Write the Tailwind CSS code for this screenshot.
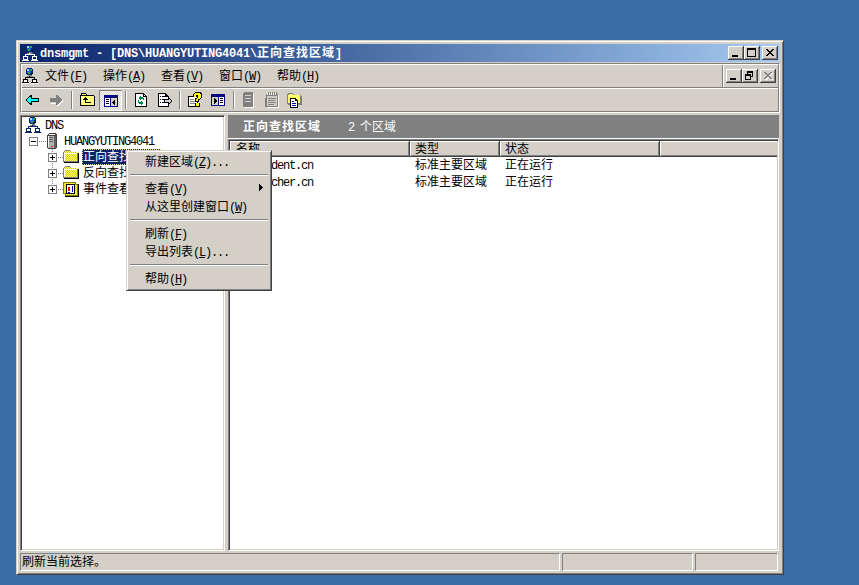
<!DOCTYPE html>
<html lang="zh-CN">
  <head>
    <meta charset="UTF-8" />
    <meta name="viewport" content="width=device-width, initial-scale=1.0" />
    <title>dnsmgmt</title>
    <script src="https://cdn.jsdelivr.net/npm/@tailwindcss/browser@4"></script>
  </head>
  <body class="bg-[#3a6ea5] h-screen overflow-hidden pl-4 pt-10 text-[12px] text-black whitespace-nowrap cursor-default font-['Liberation_Mono','Noto_Sans_CJK_SC',monospace]">

    <!-- Shared icons -->
    <svg width="0" height="0" class="absolute">
      <defs>
        <pattern id="dither" width="2" height="2" patternUnits="userSpaceOnUse">
          <path fill="#ffff66" d="M0 0h2v2H0z" /><path fill="#e0d010" d="M0 0h1v1H0zM1 1h1v1H1z" />
        </pattern>
        <pattern id="pressed" width="2" height="2" patternUnits="userSpaceOnUse">
          <path fill="#fff" d="M0 0h2v2H0z" /><path fill="#d4d0c8" d="M0 0h1v1H0zM1 1h1v1H1z" />
        </pattern>
        <symbol id="net" viewBox="0 0 16 16">
          <path fill="#808080" d="M7 7h3v1H7zM5 8h6v1H5z" />
          <path fill="#0a246a" d="M5 0h5v1h1v5h-1v1H5V6H4V1h1z" />
          <path fill="#2060e0" d="M5 1h4v4H5z" />
          <path fill="#20b040" d="M8 1h2v2H8zM6 4h2v2H6z" />
          <path fill="#a0d8ff" d="M5 1h2v2H5z" />
          <path fill="#000" d="M9 5h2v1H9z" />
        </symbol>
        <symbol id="folder" viewBox="0 0 16 16">
          <path fill="#808080" d="M1 3h1V2h5v1h1v1h6v1h1v9H0V4h1z" />
          <path fill="url(#dither)" d="M1 4h13v9H1zM2 3h5v1H2z" />
          <path fill="#fff" d="M1 5h13v1H1zM1 5h1v8H1z" />
          <path fill="#000" d="M15 5h1v10H1v-1h14z" />
        </symbol>
      </defs>
    </svg>

    <!-- Console window -->
    <div class="w-[768px] h-[535px] bg-[#d4d0c8] border border-l-[#d4d0c8] border-t-[#d4d0c8] border-r-[#404040] border-b-[#404040] shadow-[inset_1px_1px_#fff,inset_-1px_-1px_#808080] p-[3px] flex flex-col">

      <!-- Title bar -->
      <div class="h-[18px] shrink-0 flex items-center bg-linear-to-r from-[#0a246a] to-[#a6caf0] pl-0.5 pr-0.5 text-white font-bold">
        <svg class="w-4 h-4 mr-0.5" shape-rendering="crispEdges" viewBox="0 0 16 16">
          <use href="#net" width="16" height="16" />
          <path fill="#fff" d="M7 8h1v2H7zM3 9h10v1H3zM3 9h1v2H3zM12 9h1v2h-1zM1 11h5v4H1zM10 11h5v4h-5zM0 15h7v1H0zM9 15h7v1H9z" />
          <path fill="#0a246a" d="M2 12h3v2H2zM11 12h3v2h-3z" />
        </svg>
        <span class="leading-[18px] pt-px tracking-[-0.2px]">dnsmgmt - [DNS\HUANGYUTING4041\<span class="tracking-[1px]">正向查找区域</span>]</span>
        <div class="ml-auto flex">
          <svg class="w-4 h-3.5 bg-[#d4d0c8] shadow-[inset_-1px_-1px_#404040,inset_1px_1px_#fff,inset_-2px_-2px_#808080]" shape-rendering="crispEdges"><path d="M4 9h6v2H4z" /></svg>
          <svg class="w-4 h-3.5 bg-[#d4d0c8] shadow-[inset_-1px_-1px_#404040,inset_1px_1px_#fff,inset_-2px_-2px_#808080]" shape-rendering="crispEdges"><path fill-rule="evenodd" d="M3 2h9v9H3zM4 4v6h7V4z" /></svg>
          <svg class="w-4 h-3.5 ml-0.5 bg-[#d4d0c8] shadow-[inset_-1px_-1px_#404040,inset_1px_1px_#fff,inset_-2px_-2px_#808080]" shape-rendering="crispEdges"><path d="M4 3h2v1h1v1h2V4h1V3h2v1h-1v1h-1v1H9v1h1v1h1v1h1v1h-2V9H9V8H7v1H6v1H4V9h1V8h1V7h1V6H6V5H5V4H4z" /></svg>
        </div>
      </div>

      <!-- Menu bar and toolbar -->
      <div class="mt-px h-[50px] shrink-0 border border-l-[#808080] border-t-[#808080] border-r-white border-b-white">
        <div class="h-full border border-l-white border-t-white border-r-[#808080] border-b-[#808080]">
          <div class="h-[23px] flex border-b border-[#808080]">
            <svg class="w-4 h-4 mt-[3px] mr-[7px]" shape-rendering="crispEdges" viewBox="0 0 16 16">
              <use href="#net" width="16" height="16" />
              <path fill="#000" d="M7 8h1v2H7zM3 9h10v1H3zM3 9h1v2H3zM12 9h1v2h-1zM1 11h5v4H1zM10 11h5v4h-5zM0 14h7v1H0zM9 14h7v1H9z" />
              <path fill="#fff" d="M2 12h3v2H2zM11 12h3v2h-3zM0 15h7v1H0zM9 15h7v1H9z" />
            </svg>
            <div class="flex gap-4 leading-6">
              <span class="w-[42px]">文件<span class="tracking-[-1.2px]">(<u>F</u>)</span></span>
              <span class="w-[42px]">操作<span class="tracking-[-1.2px]">(<u>A</u>)</span></span>
              <span class="w-[42px]">查看<span class="tracking-[-1.2px]">(<u>V</u>)</span></span>
              <span class="w-[42px]">窗口<span class="tracking-[-1.2px]">(<u>W</u>)</span></span>
              <span class="w-[42px]">帮助<span class="tracking-[-1.2px]">(<u>H</u>)</span></span>
            </div>
            <div class="ml-auto w-14 h-[22px] flex items-center border-l border-[#808080] shadow-[inset_1px_0_#fff] pl-[3px]">
              <svg class="w-4 h-3.5 bg-[#d4d0c8] shadow-[inset_-1px_-1px_#404040,inset_1px_1px_#fff,inset_-2px_-2px_#808080]" shape-rendering="crispEdges"><path d="M4 9h6v2H4z" /></svg>
              <svg class="w-4 h-3.5 bg-[#d4d0c8] shadow-[inset_-1px_-1px_#404040,inset_1px_1px_#fff,inset_-2px_-2px_#808080]" shape-rendering="crispEdges"><path fill-rule="evenodd" d="M5 2h6v6H9v3H3V5h2zM6 4v1h3v2h1V4zM4 7v3h4V7z" /></svg>
              <svg class="w-4 h-3.5 ml-0.5 bg-[#d4d0c8] shadow-[inset_-1px_-1px_#404040,inset_1px_1px_#fff,inset_-2px_-2px_#808080]" shape-rendering="crispEdges">
                <path fill="#fff" transform="translate(1 1)" d="M4 3h2v1h1v1h2V4h1V3h2v1h-1v1h-1v1H9v1h1v1h1v1h1v1h-2V9H9V8H7v1H6v1H4V9h1V8h1V7h1V6H6V5H5V4H4z" />
                <path fill="#808080" d="M4 3h2v1h1v1h2V4h1V3h2v1h-1v1h-1v1H9v1h1v1h1v1h1v1h-2V9H9V8H7v1H6v1H4V9h1V8h1V7h1V6H6V5H5V4H4z" />
              </svg>
            </div>
          </div>

          <div class="h-[23px] border-t border-white flex items-center">
            <!-- back / forward -->
            <svg class="w-[23px] h-4" shape-rendering="crispEdges" viewBox="-3 0 23 16">
              <path fill="#000" d="M1 7h1V6h1V5h1V4h1V3h2v3h7v4H7v3H5v-1H4v-1H3v-1H2V9H1z" />
              <path fill="#0ff" d="M2 8V7h1V6h1V5h2v2h7v2H6v2H4v-1H3V9H2z" />
            </svg>
            <svg class="w-[23px] h-4" shape-rendering="crispEdges" viewBox="-3 0 23 16">
              <path fill="#fff" d="M3 11h6v2h1v-1h1v-1h1v-1h1V9h1V8h1v2h-1v1h-1v1h-1v1h-1v1H9v-2H3z" />
              <path fill="#808080" d="M2 6h6V3h2v1h1v1h1v1h1v1h1v2h-1v1h-1v1h-1v1h-1v1H8v-3H2z" />
            </svg>
            <div class="w-0.5 h-[18px] mx-[3px] bg-[#808080] border-r border-white"></div>
            <!-- up one level -->
            <svg class="w-[23px] h-4" shape-rendering="crispEdges" viewBox="-3 0 23 16">
              <path fill="#000" d="M2 2V1h5v1h1v1h7v1h1v10H1V3h1z" />
              <path fill="#ffff70" d="M2 4h13v9H2zM3 2h4v1H3z" />
              <path fill="#000" d="M6 5h1v1h1v1h1v1H7v2h5v1H6V8H4V7h1V6h1z" />
            </svg>
            <!-- show or hide tree -->
            <svg class="w-[23px] h-[21px] border border-t-[#808080] border-l-[#808080] border-b-white border-r-white" shape-rendering="crispEdges" viewBox="0 0 21 19">
              <path fill="url(#pressed)" d="M0 0h21v19H0z" />
              <path fill="#0a0a80" d="M4 4h14v12H4z" />
              <path fill="#fff" d="M5 7h5v8H5z" /><path fill="#d4d0c8" d="M11 7h6v8h-6z" />
              <path fill="#000" d="M6 8h3v1H6zM6 10h3v1H6zM6 12h3v1H6zM12 11h1v-1h1V9h1v5h-1v-1h-1v-1h-1z" />
            </svg>
            <div class="w-0.5 h-[18px] mx-[3px] bg-[#808080] border-r border-white"></div>
            <!-- refresh -->
            <svg class="w-[23px] h-4" shape-rendering="crispEdges" viewBox="-3 0 23 16">
              <path fill="#000" d="M2 1h9v1h1v1h1v1h1v11H2z" />
              <path fill="#fff" d="M3 2h7v3h3v9H3z" /><path fill="#d4d0c8" d="M11 3h1v1h-1z" />
              <path fill="#008040" d="M7 4h1v1h2v1h1v2h-1V7H8v1H7V7H6V5h1zM5 8h1v2h2V9h1v1h1v2H9v1H8v-1H6v-1H5z" />
            </svg>
            <!-- export -->
            <svg class="w-[23px] h-4" shape-rendering="crispEdges" viewBox="-3 0 23 16">
              <path fill="#000" d="M2 1h8v1h1v1h1v1h1v11H2z" />
              <path fill="#fff" d="M3 2h6v3h3v9H3z" />
              <path fill="#000" d="M4 4h1v1H4zM6 4h3v1H6zM4 7h1v1H4zM6 7h4v1H6zM4 10h1v1H4zM6 10h3v1H6z" />
              <path fill="#000" d="M8 7h4V5h1v1h1v1h1v1h1v2h-1v1h-1v1h-1v1h-1v-2H8z" /><path fill="#d4d0c8" d="M9 8h4V7h1v1h1v2h-1v1h-1v-1H9z" />
            </svg>
            <div class="w-0.5 h-[18px] mx-[3px] bg-[#808080] border-r border-white"></div>
            <!-- help -->
            <svg class="w-[23px] h-4" shape-rendering="crispEdges" viewBox="-3 0 23 16">
              <path fill="#000" d="M1 4h10v11H1z" /><path fill="#fff" d="M2 5h8v9H2z" />
              <path fill="#808080" d="M3 7h4v1H3zM3 9h5v1H3zM3 11h5v1H3z" />
              <path fill="#000" d="M7 1h1V0h6v1h1v5h-1v1h-1v1h-1v2H8V6h2V5H6V2h1z" />
              <path fill="#ff0" d="M8 1h5v1h1v4h-1v1h-2v2H9V7h1V6h1V3H9v2H7V2h1z" />
              <path fill="#000" d="M8 11h5v4H8z" /><path fill="#ff0" d="M9 11h3v3H9z" />
            </svg>
            <!-- action pane -->
            <svg class="w-[23px] h-4" shape-rendering="crispEdges" viewBox="-3 0 23 16">
              <path fill="#0a0a80" d="M1 2h14v12H1z" />
              <path fill="#d4d0c8" d="M2 5h6v8H2z" /><path fill="#fff" d="M9 5h5v8H9z" />
              <path fill="#000" d="M10 6h3v1h-3zM10 8h3v1h-3zM10 10h3v1h-3zM4 6h1v1h1v1h1v2H6v1H5v1H4z" />
            </svg>
            <div class="w-0.5 h-[18px] mx-[3px] bg-[#808080] border-r border-white"></div>
            <!-- server, properties, copy folder -->
            <svg class="w-[23px] h-4" shape-rendering="crispEdges" viewBox="-3 0 23 16">
              <path fill="#fff" d="M3 2h10v14H3z" /><path fill="#808080" d="M3 0h9v15H2V1h1z" />
              <path fill="#d4d0c8" d="M4 3h6v1H4zM4 6h6v1H4zM4 9h6v1H4z" />
            </svg>
            <svg class="w-[23px] h-4" shape-rendering="crispEdges" viewBox="-3 0 23 16">
              <path fill="#fff" d="M2 3h13v13H3z" /><path fill="#808080" d="M2 2h12v13H1V6h1z" />
              <path fill="#d4d0c8" d="M3 4h10v10H3z" />
              <path fill="#fff" d="M3 1h1v2H3zM5 1h1v2H5zM7 1h1v2H7zM9 1h1v2H9zM11 1h1v2h-1z" />
              <path fill="#808080" d="M4 0h1v2H4zM6 0h1v2H6zM8 0h1v2H8zM10 0h1v2h-1zM12 0h1v2h-1zM4 6h8v1H4zM4 8h7v1H4zM4 10h8v1H4zM4 12h6v1H4z" />
            </svg>
            <svg class="w-[23px] h-4" shape-rendering="crispEdges" viewBox="-3 0 23 16">
              <path fill="#808080" d="M1 1h5v1h1v1h7v1h1v9H1v-1H0V2h1z" /><path fill="#ffff70" d="M1 3h12v8H1zM2 2h4v1H2z" />
              <path fill="#000" d="M3 6h6v1h1v1h1v8H3z" /><path fill="#fff" d="M4 7h4v2h2v6H4z" />
              <path fill="#0000c0" d="M5 9h2v1H5zM5 11h4v1H5zM5 13h4v1H5z" />
            </svg>
          </div>
        </div>
      </div>

      <!-- Panes -->
      <div class="flex mt-0.5 h-[436px] shrink-0 gap-[3px]">
        <!-- Console tree -->
        <div class="w-[205px] bg-white border border-l-[#808080] border-t-[#808080] border-r-white border-b-white shadow-[inset_1px_1px_#404040,inset_-1px_-1px_#d4d0c8] pl-px pt-px leading-[18px]">
          <div class="h-4 flex pl-[3px]">
            <svg class="w-4 h-4 mr-1" shape-rendering="crispEdges" viewBox="0 0 16 16">
              <use href="#net" width="16" height="16" />
              <path fill="#0a246a" d="M7 8h1v2H7zM3 9h10v1H3zM3 9h1v2H3zM12 9h1v2h-1zM1 11h5v4H1zM10 11h5v4h-5zM0 15h7v1H0zM9 15h7v1H9z" />
              <path fill="#fff" d="M2 12h3v2H2zM11 12h3v2h-3z" />
            </svg>
            <span class="tracking-[-1.2px]">DNS</span>
          </div>
          <div class="h-4 flex pl-[7px]">
            <svg class="w-[32px] h-4 mr-[3px]" shape-rendering="crispEdges">
              <path fill="#808080" fill-rule="evenodd" d="M0 4h9v9H0zM1 5v7h7V5z" /><path d="M2 8h5v1H2z" />
              <path fill="#808080" d="M10 8h1v1h-1zM12 8h1v1h-1zM14 8h1v1h-1zM16 8h1v1h-1z" />
              <path fill="#404040" d="M20 0h7v1h1v14h-1v1h-8v-1h-1V2h1V1h1z" />
              <path fill="#b0b0b0" d="M19 3h6v12h-6z" /><path fill="#fff" d="M20 1h6v1h-6zM19 3h1v11h-1z" />
              <path fill="#606060" d="M20 4h4v1h-4zM20 6h4v1h-4zM20 8h4v1h-4zM25 3h2v12h-2z" />
              <path fill="#f00" d="M22 13h2v1h-2z" />
            </svg>
            <span class="tracking-[-1.2px]">HUANGYUTING4041</span>
          </div>
          <div class="h-4 flex pl-[26px]">
            <svg class="w-[31px] h-4 mr-[3px]" shape-rendering="crispEdges">
              <path fill="#808080" fill-rule="evenodd" d="M0 4h9v9H0zM1 5v7h7V5z" /><path d="M2 8h5v1H2zM4 6h1v5H4z" />
              <path fill="#808080" d="M10 8h1v1h-1zM12 8h1v1h-1zM14 8h1v1h-1zM4 0h1v1H4zM4 2h1v1H4zM4 14h1v1H4z" />
              <use href="#folder" x="15" y="-1" width="16" height="16" />
            </svg>
            <span class="w-[79px] h-4 bg-[#0a246a] text-white outline-1 -outline-offset-1 outline-dotted outline-[#f5db95] pl-px">正向查找区域</span>
          </div>
          <div class="h-4 flex pl-[26px]">
            <svg class="w-[31px] h-4 mr-1" shape-rendering="crispEdges">
              <path fill="#808080" fill-rule="evenodd" d="M0 4h9v9H0zM1 5v7h7V5z" /><path d="M2 8h5v1H2zM4 6h1v5H4z" />
              <path fill="#808080" d="M10 8h1v1h-1zM12 8h1v1h-1zM14 8h1v1h-1zM4 0h1v1H4zM4 2h1v1H4zM4 14h1v1H4z" />
              <use href="#folder" x="15" y="-1" width="16" height="16" />
            </svg>
            <span>反向查找区域</span>
          </div>
          <div class="h-4 flex pl-[26px]">
            <svg class="w-[31px] h-4 mr-1" shape-rendering="crispEdges">
              <path fill="#808080" fill-rule="evenodd" d="M0 4h9v9H0zM1 5v7h7V5z" /><path d="M2 8h5v1H2zM4 6h1v5H4z" />
              <path fill="#808080" d="M10 8h1v1h-1zM12 8h1v1h-1zM14 8h1v1h-1zM4 0h1v1H4zM4 2h1v1H4z" />
              <path fill="#808000" d="M15 1h13v2h2v12H17v-2h-2z" /><path fill="#000" d="M30 3h1v13H17v-1h13z" />
              <path fill="url(#dither)" d="M16 2h11v2h2v10H18v-2h-2z" />
              <path fill="#000" d="M18 3h9v10h-9z" /><path fill="#fff" d="M19 4h7v8h-7z" />
              <path fill="#f00" d="M20 6h2v4h-2z" /><path fill="#00c" d="M24 5h1v6h-1zM20 11h2v1h-2z" />
            </svg>
            <span>事件查看器</span>
          </div>
        </div>

        <!-- Zone list -->
        <div class="w-[551px] flex flex-col">
          <div class="h-[23px] shrink-0 bg-[#808080] text-white leading-[26px] pl-[15px] flex">
            <span class="w-[105px] font-bold tracking-[1px]">正向查找区域</span>
            <span><span class="tracking-[-1.2px]">2 </span>个区域</span>
          </div>
          <div class="h-px shrink-0 bg-white"></div>
          <div class="grow bg-white border border-l-[#808080] border-t-[#808080] border-r-white border-b-white shadow-[inset_1px_1px_#404040,inset_-1px_-1px_#d4d0c8] pl-px pt-px pr-px">
            <div class="h-4 flex leading-[18px]">
              <div class="w-[180px] h-4 overflow-hidden pl-1.5 bg-[#d4d0c8] shadow-[inset_-1px_-1px_#404040,inset_1px_1px_#fff,inset_-2px_-2px_#808080]">名称</div>
              <div class="w-[90px] h-4 overflow-hidden pl-[5px] bg-[#d4d0c8] shadow-[inset_-1px_-1px_#404040,inset_1px_1px_#fff,inset_-2px_-2px_#808080]">类型</div>
              <div class="w-40 h-4 overflow-hidden pl-[5px] bg-[#d4d0c8] shadow-[inset_-1px_-1px_#404040,inset_1px_1px_#fff,inset_-2px_-2px_#808080]">状态</div>
              <div class="grow h-4 bg-[#d4d0c8] shadow-[inset_0_-1px_#404040,inset_1px_1px_#fff,inset_0_-2px_#808080]"></div>
            </div>
            <div class="grid grid-cols-[162px_90px_160px] pl-[23px] pt-px leading-[17px]">
              <span class="tracking-[-1.2px]">student.cn</span><span>标准主要区域</span><span>正在运行</span>
              <span class="tracking-[-1.2px]">teacher.cn</span><span>标准主要区域</span><span>正在运行</span>
            </div>
          </div>
        </div>
      </div>

      <!-- Status bar -->
      <div class="mt-0.5 h-[18px] shrink-0 flex gap-0.5 leading-[18px]">
        <div class="w-[540px] pl-px border border-l-[#808080] border-t-[#808080] border-r-white border-b-white">刷新当前选择。</div>
        <div class="w-[131px] border border-l-[#808080] border-t-[#808080] border-r-white border-b-white"></div>
        <div class="w-[83px] border border-l-[#808080] border-t-[#808080] border-r-white border-b-white"></div>
      </div>
    </div>

    <!-- Context menu -->
    <div class="absolute left-[126px] top-[150px] w-[146px] h-[141px] bg-[#d4d0c8] border border-l-[#d4d0c8] border-t-[#d4d0c8] border-r-[#404040] border-b-[#404040] shadow-[inset_1px_1px_#fff,inset_-1px_-1px_#808080] p-0.5 leading-5">
      <div class="h-[18px] pl-4">新建区域<span class="tracking-[-1.2px]">(<u>Z</u>)...</span></div>
      <div class="h-0.5 mx-px mt-[3px] mb-1 bg-[#808080] border-b border-white"></div>
      <div class="h-[18px] pl-4 pr-1.5 flex justify-between">
        <span>查看<span class="tracking-[-1.2px]">(<u>V</u>)</span></span>
        <svg class="w-1 h-[7px] mt-1" shape-rendering="crispEdges"><path d="M0 0h1v1h1v1h1v1h1v1H3v1H2v1H1v1H0z" /></svg>
      </div>
      <div class="h-[18px] pl-4">从这里创建窗口<span class="tracking-[-1.2px]">(<u>W</u>)</span></div>
      <div class="h-0.5 mx-px mt-[3px] mb-1 bg-[#808080] border-b border-white"></div>
      <div class="h-[18px] pl-4">刷新<span class="tracking-[-1.2px]">(<u>F</u>)</span></div>
      <div class="h-[18px] pl-4">导出列表<span class="tracking-[-1.2px]">(<u>L</u>)...</span></div>
      <div class="h-0.5 mx-px mt-[3px] mb-1 bg-[#808080] border-b border-white"></div>
      <div class="h-[18px] pl-4">帮助<span class="tracking-[-1.2px]">(<u>H</u>)</span></div>
    </div>
  </body>
</html>
